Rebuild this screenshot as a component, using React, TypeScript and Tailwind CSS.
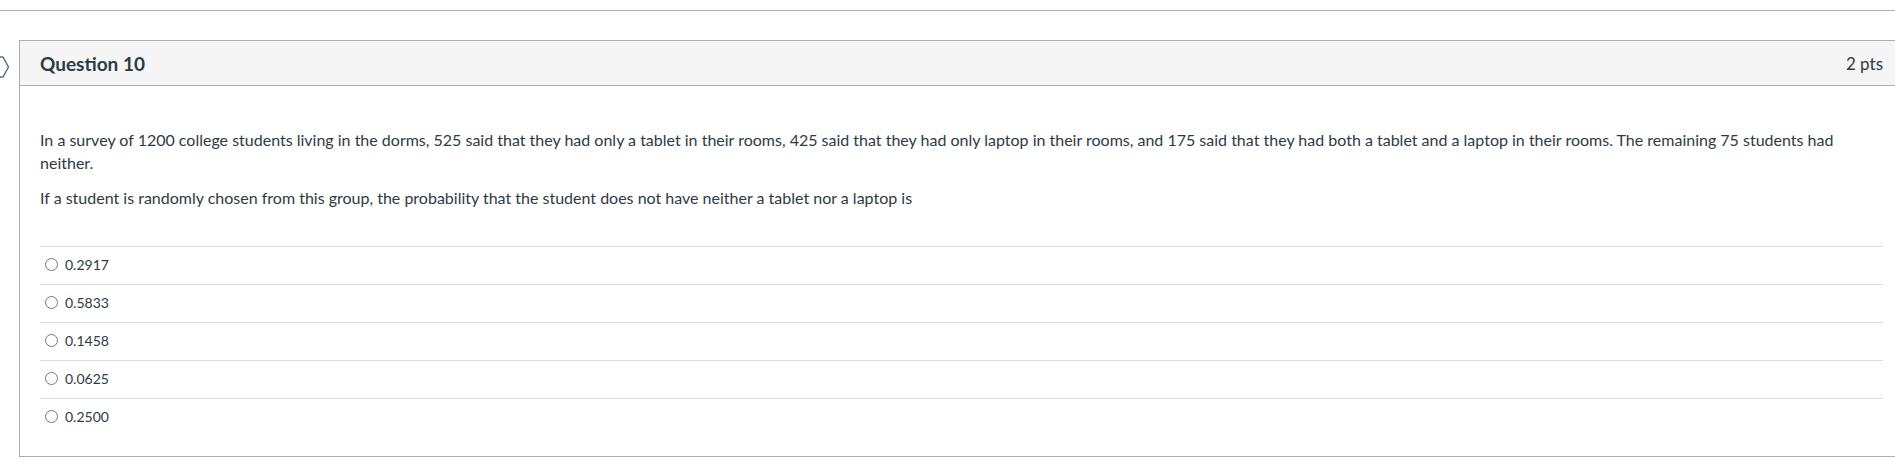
const options = ["0.2917", "0.5833", "0.1458", "0.0625", "0.2500"];

function FlagIcon() {
  return (
    <svg
      width="20"
      height="22"
      viewBox="0 0 20 22"
      className="absolute left-[-10px] top-[16px]"
    >
      <polygon
        points="1.5,1 13,1 18.5,11 13,21 1.5,21 1.5,1"
        fill="none"
        stroke="#4f6f8f"
        strokeWidth="1.5"
        strokeLinejoin="round"
      />
    </svg>
  );
}

export default function App() {
  return (
    <main
      className="w-full h-[473px] bg-white overflow-hidden text-[#2d3b45]"
      style={{ fontFamily: "Lato, 'Liberation Sans', sans-serif" }}
    >
      <div className="mt-[10px] h-px bg-[#adadad]" />
      <div className="relative mt-[29px]">
        <FlagIcon />
        <div className="ml-[19px] border-l border-t border-b border-[#adadad]">
          <header className="h-[45px] bg-[#f5f5f5] border-b border-[#adadad] flex items-center justify-between pl-[20px] pr-[12px]">
            <h2 className="text-[19px] font-bold leading-none">Question 10</h2>
            <span className="text-[17px] leading-none">2 pts</span>
          </header>
          <div className="pl-[20px] pr-[12px] pt-[42px] pb-[20px]">
            <div className="text-[16px] leading-[23px]">
              <p>
                In a survey of 1200 college students living in the dorms, 525 said that they had only a tablet in their
                rooms, 425 said that they had only laptop in their rooms, and 175 said that they had both a tablet and a
                laptop in their rooms. The remaining 75 students had neither.
              </p>
              <p className="mt-[12px]">
                If a student is randomly chosen from this group, the probability that the student does not have neither a
                tablet nor a laptop is
              </p>
            </div>
            <ul className="mt-[37px]">
              {options.map((o) => (
                <li
                  key={o}
                  className="h-[38px] border-t border-[#dcdcdc] flex items-center pl-[5px] pb-[2px] text-[14px]"
                >
                  <span className="w-[13px] h-[13px] rounded-full border-[1.5px] border-[#777] bg-white" />
                  <span className="ml-[7px]">{o}</span>
                </li>
              ))}
            </ul>
          </div>
        </div>
      </div>
    </main>
  );
}
